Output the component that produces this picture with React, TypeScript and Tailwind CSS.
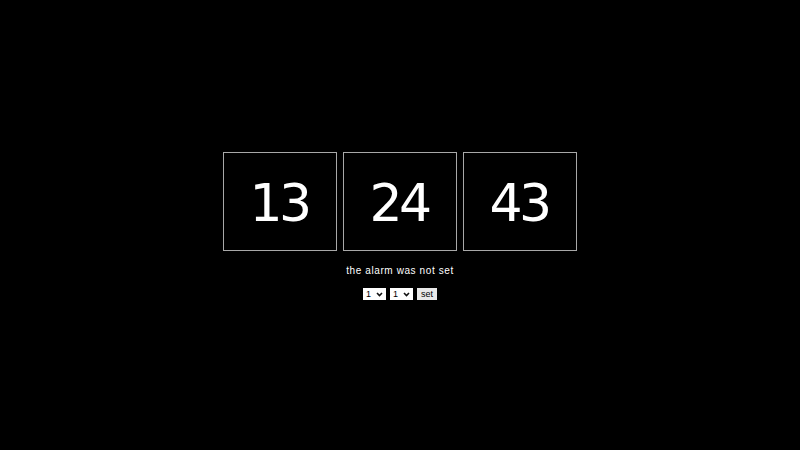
import { useState } from "react";

const Tile = ({ value }: { value: string }) => (
  <div className="w-[114px] h-[99px] border border-[#a8a8a8] flex items-center justify-center">
    <span className="text-[52px] leading-none tracking-[-3.5px] text-white font-['DejaVu_Sans',sans-serif] pt-[2px] pr-[2px]">
      {value}
    </span>
  </div>
);

const Picker = ({ value }: { value: string }) => (
  <div className="w-[23px] h-[12px] bg-white flex items-center justify-between pl-[3px] pr-[3px]">
    <span className="text-[9px] leading-none text-black">{value}</span>
    <svg width="7" height="5" viewBox="0 0 7 5" fill="none">
      <path d="M1 1l2.5 2.5L6 1" stroke="#111" strokeWidth="1.6" />
    </svg>
  </div>
);

export default function App() {
  const [time] = useState(["13", "24", "43"]);

  return (
    <div className="min-h-screen w-full bg-black flex flex-col items-center justify-center font-['Liberation_Sans',sans-serif]">
      {/* clock tiles */}
      <div className="flex gap-[6px] mt-[2px]">
        {time.map((t, i) => (
          <Tile key={i} value={t} />
        ))}
      </div>

      <p className="mt-[14px] text-[10px] leading-[12px] tracking-[0.06em] text-white">
        the alarm was not set
      </p>

      {/* alarm controls */}
      <div className="mt-[11px] flex items-center gap-[4px]">
        <Picker value="1" />
        <Picker value="1" />
        <button className="h-[12px] w-[20px] bg-[#e9e9e9] text-[9px] leading-none text-black">
          set
        </button>
      </div>
    </div>
  );
}
